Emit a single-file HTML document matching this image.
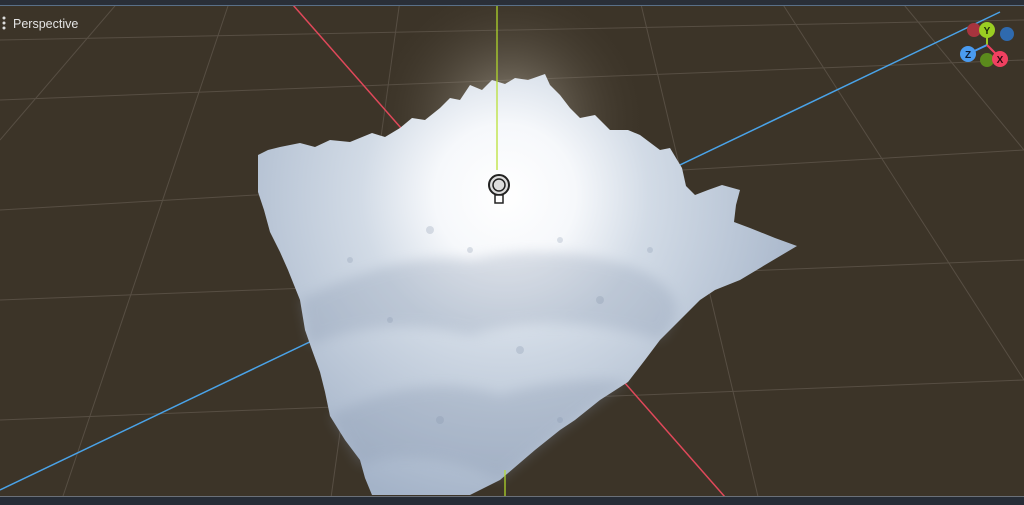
<!DOCTYPE html>
<html><head><meta charset="utf-8"><style>
html,body{margin:0;padding:0;width:1024px;height:505px;overflow:hidden;background:#3c3428;font-family:"Liberation Sans",sans-serif}
</style></head><body>
<svg width="1024" height="505" viewBox="0 0 1024 505" style="position:absolute;left:0;top:0">
<defs>
<radialGradient id="glow" cx="510" cy="120" r="140" gradientUnits="userSpaceOnUse">
<stop offset="0" stop-color="#e0d8c8" stop-opacity="0.55"/>
<stop offset="1" stop-color="#3c3428" stop-opacity="0"/>
</radialGradient>
<radialGradient id="terr" cx="505" cy="195" r="320" gradientUnits="userSpaceOnUse">
<stop offset="0" stop-color="#ffffff"/>
<stop offset="0.22" stop-color="#f6f8fb"/>
<stop offset="0.45" stop-color="#d2dbe6"/>
<stop offset="1" stop-color="#a4b3c8"/>
</radialGradient>
<filter id="blur"><feGaussianBlur stdDeviation="6"/></filter>
</defs>
<rect width="1024" height="505" fill="#3c3428"/>
<g stroke="#5e554a" stroke-width="1" opacity="0.8" fill="none">
<line x1="0" y1="100" x2="1024" y2="60"/>
<line x1="0" y1="210" x2="1024" y2="150"/>
<line x1="0" y1="300" x2="1024" y2="260"/>
<line x1="0" y1="420" x2="1024" y2="380"/>
<line x1="120" y1="0" x2="0" y2="140"/>
<line x1="230" y1="0" x2="60" y2="505"/>
<line x1="400" y1="0" x2="330" y2="505"/>
<line x1="640" y1="0" x2="760" y2="505"/>
<line x1="780" y1="0" x2="1024" y2="380"/>
<line x1="900" y1="0" x2="1024" y2="150"/>
<line x1="0" y1="40" x2="1024" y2="20"/>
</g>
<rect width="1024" height="505" fill="url(#glow)"/>
<line x1="293" y1="5" x2="725" y2="497" stroke="#e0485a" stroke-width="1.5"/>
<line x1="0" y1="490" x2="1000" y2="12" stroke="#4aa3e8" stroke-width="1.5"/>
<polygon fill="url(#terr)" points="258,155 268,150 280,147 300,143 315,147 330,140 350,142 372,133 385,137 400,128 412,118 425,120 440,108 450,98 460,100 470,85 482,90 492,80 505,84 515,78 528,80 545,74 550,85 560,95 570,108 580,118 595,115 610,130 628,130 640,135 660,150 670,148 682,168 686,186 695,195 708,190 722,185 740,190 736,205 734,222 750,228 760,232 775,238 797,246 770,262 740,280 715,290 700,300 682,318 660,340 645,360 628,382 600,400 575,420 560,430 535,450 500,480 470,495 372,495 365,478 360,460 345,440 330,416 325,392 320,372 312,350 305,330 302,312 300,300 294,285 288,270 280,252 270,232 264,210 258,192"/>
<g fill="#8796ad" opacity="0.28" filter="url(#blur)">
<path d="M300,300 Q400,250 470,260 Q560,240 640,270 Q700,300 660,340 Q560,310 470,335 Q380,315 310,345Z"/>
<path d="M330,416 Q420,370 500,395 Q570,375 628,382 Q560,430 500,480 Q420,445 360,465Z"/>
</g>
<g fill="#7f8ea6" opacity="0.25">
<circle cx="470" cy="250" r="3"/><circle cx="430" cy="230" r="4"/><circle cx="560" cy="240" r="3"/><circle cx="600" cy="300" r="4"/><circle cx="390" cy="320" r="3"/><circle cx="520" cy="350" r="4"/><circle cx="440" cy="420" r="4"/><circle cx="560" cy="420" r="3"/><circle cx="350" cy="260" r="3"/><circle cx="650" cy="250" r="3"/>
</g>
<line x1="497" y1="5" x2="497" y2="170" stroke="#b6e02a" stroke-width="1.2"/>
<line x1="505" y1="470" x2="505" y2="497" stroke="#b6e02a" stroke-width="1.2"/>
<circle cx="499" cy="185" r="10" fill="#ddd" stroke="#222" stroke-width="2"/>
<circle cx="499" cy="185" r="6" fill="none" stroke="#222" stroke-width="1.5"/>
<rect x="495" y="195" width="8" height="8" fill="#fff" stroke="#222" stroke-width="1.5"/>
<rect x="0" y="0" width="1024" height="5" fill="#2a2f38"/>
<line x1="0" y1="5.5" x2="1024" y2="5.5" stroke="#5a7088" stroke-width="1"/>
<rect x="0" y="496" width="1024" height="1" fill="#6b7078"/>
<rect x="0" y="497" width="1024" height="8" fill="#262c36"/>
<circle cx="974" cy="30" r="7" fill="#a8343e"/>
<circle cx="1007" cy="34" r="7" fill="#2f6aae"/>
<line x1="987" y1="30" x2="987" y2="45" stroke="#9acd22" stroke-width="2"/>
<line x1="987" y1="45" x2="968" y2="54" stroke="#4a9bf0" stroke-width="2"/>
<line x1="987" y1="45" x2="1000" y2="58" stroke="#f04060" stroke-width="2"/>
<circle cx="987" cy="60" r="7" fill="#5b8a1c"/>
<circle cx="987" cy="30" r="8" fill="#9acd22"/>
<text x="987" y="34" font-size="10" text-anchor="middle" fill="#1c2a08" font-weight="bold">Y</text>
<circle cx="968" cy="54" r="8" fill="#4a9bf0"/>
<text x="968" y="58" font-size="10" text-anchor="middle" fill="#0c1a30" font-weight="bold">Z</text>
<circle cx="1000" cy="59" r="8" fill="#f04060"/>
<text x="1000" y="63" font-size="10" text-anchor="middle" fill="#300810" font-weight="bold">X</text>
<circle cx="4" cy="18" r="1.5" fill="#ddd"/><circle cx="4" cy="23" r="1.5" fill="#ddd"/><circle cx="4" cy="28" r="1.5" fill="#ddd"/>
<text x="13" y="28" font-size="12.5" fill="#e4e4e4">Perspective</text>
</svg>
</body></html>
